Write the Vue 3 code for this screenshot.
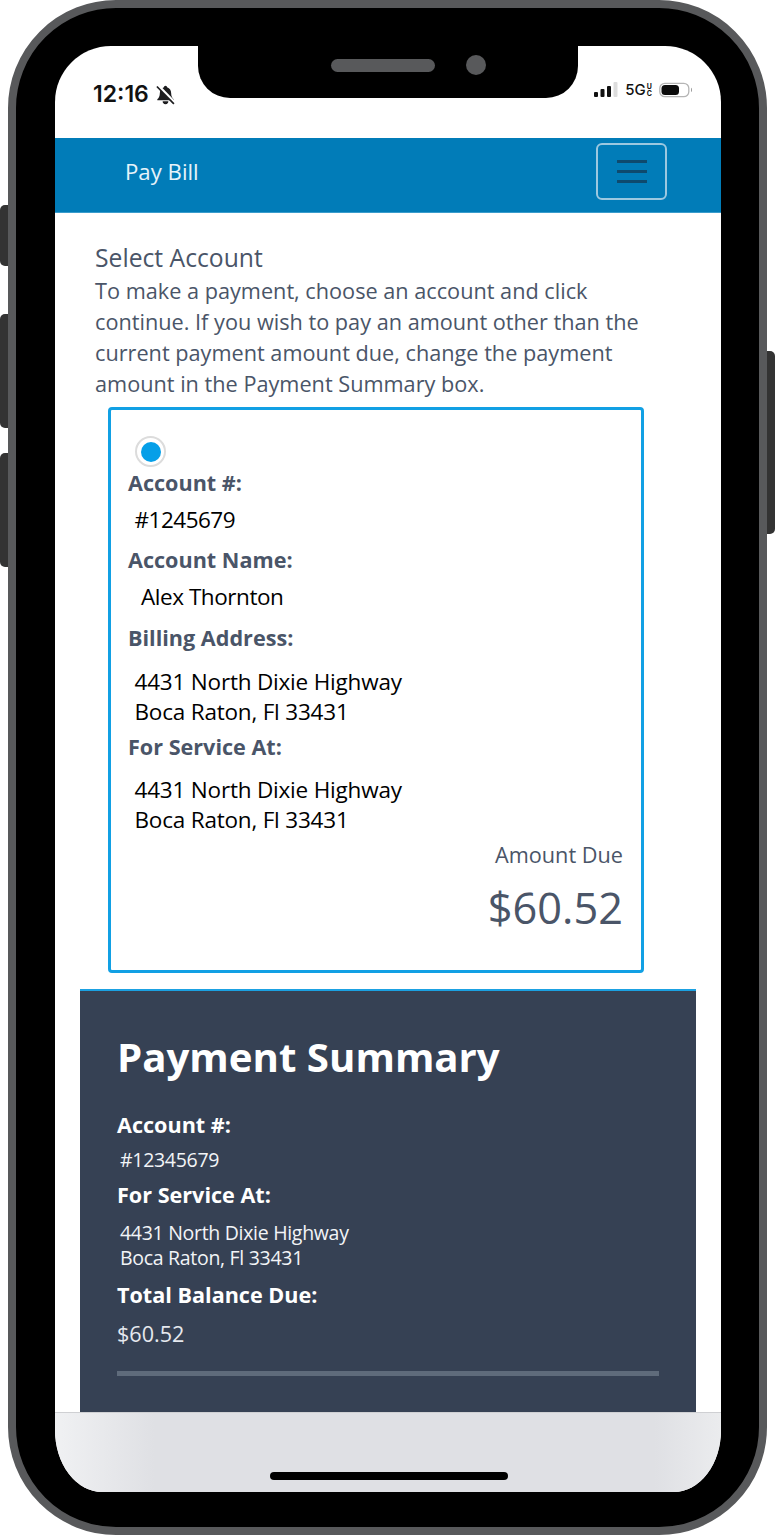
<script setup>
const card = [
  { label: 'Account #:', lines: ['#1245679'], cls: 'acct' },
  { label: 'Account Name:', lines: ['Alex Thornton'], cls: 'name' },
  { label: 'Billing Address:', lines: ['4431 North Dixie Highway', 'Boca Raton, Fl 33431'], cls: 'billing' },
  { label: 'For Service At:', lines: ['4431 North Dixie Highway', 'Boca Raton, Fl 33431'], cls: 'service' },
]
</script>

<template>
  <div class="stage">
    <span class="side-btn b1"></span>
    <span class="side-btn b2"></span>
    <span class="side-btn b3"></span>
    <span class="side-btn b4"></span>
    <div class="phone">
      <div class="screen">
        <div class="notch">
          <span class="speaker"></span>
          <span class="camera"></span>
        </div>
        <div class="status">
          <div class="status-left">
            <span class="time">12:16</span>
            <svg class="bell" viewBox="0 0 20 20" width="21" height="21">
              <path d="M10 1.600c-.9 0-1.500.7-1.500 1.500C5.900 3.900 4.600 6.100 4.600 8.700c0 2.800-.9 4.300-2.400 5.800v1h15.600v-1c-1.500-1.500-2.400-3-2.400-5.800 0-2.600-1.300-4.800-3.900-5.600 0-.8-.6-1.500-1.500-1.500z" fill="#1c1c1e"/>
              <path d="M7.300 16.500a2.700 2.700 0 0 0 5.400 0z" fill="#1c1c1e"/>
              <path d="M3 1.800 19 18.300" stroke="#fff" stroke-width="3"/>
              <path d="M1.800 2.400 18 19" stroke="#1c1c1e" stroke-width="1.600"/>
            </svg>
          </div>
          <div class="status-right">
            <svg viewBox="0 0 24 16" width="24" height="16">
              <rect x="0" y="10" width="4" height="5" rx="1" fill="#111"/>
              <rect x="6.500" y="7" width="4" height="8" rx="1" fill="#111"/>
              <rect x="13" y="4" width="4" height="11" rx="1" fill="#111"/>
              <rect x="19.500" y="0" width="4" height="15" rx="1" fill="#ddd"/>
            </svg>
            <span class="net">5G<span class="uc"><i>U</i><i>C</i></span></span>
            <svg viewBox="0 0 34 16" width="34" height="16">
              <rect x=".8" y="1.300" width="29" height="13.400" rx="5" fill="none" stroke="#b5b5b5" stroke-width="1.300"/>
              <rect x="2.500" y="3" width="17.500" height="10" rx="3.500" fill="#0b0b0b"/>
              <path d="M32 5.800c1.300.5 1.300 3.900 0 4.400z" fill="#999"/>
            </svg>
          </div>
        </div>

        <header class="topbar">
          <span class="topbar-title">Pay Bill</span>
          <button class="burger" type="button" aria-label="Menu">
            <span></span><span></span><span></span>
          </button>
        </header>

        <main class="content">
          <section class="intro">
            <h2>Select Account</h2>
            <p>To make a payment, choose an account and click continue. If you wish to pay an amount other than the current payment amount due, change the payment amount in the Payment Summary box.</p>
          </section>

          <section class="card">
            <span class="radio"><span></span></span>
            <div v-for="row in card" :key="row.label" class="row" :class="row.cls">
              <div class="label">{{ row.label }}</div>
              <div class="value">
                <div v-for="(l, i) in row.lines" :key="i">{{ l }}</div>
              </div>
            </div>
            <div class="due">
              <div class="due-label">Amount Due</div>
              <div class="due-value">$60.52</div>
            </div>
          </section>

          <section class="summary">
            <h1>Payment Summary</h1>
            <div class="s-label s-first">Account #:</div>
            <div class="s-value s-acct">#12345679</div>
            <div class="s-label s-svc">For Service At:</div>
            <div class="s-value s-addr">
              <div>4431 North Dixie Highway</div>
              <div>Boca Raton, Fl 33431</div>
            </div>
            <div class="s-label s-total">Total Balance Due:</div>
            <div class="s-amount">$60.52</div>
            <div class="s-rule"></div>
          </section>
        </main>

        <footer class="dock"><span class="home"></span></footer>
      </div>
    </div>
  </div>
</template>

<style scoped>
.stage {
  position: relative;
  width: 775px;
  height: 1536px;
  overflow: hidden;
  background: #fff;
  font-family: "Open Sans", "Noto Sans", sans-serif;
}
.side-btn {
  position: absolute;
  background: #333;
  width: 9px;
}
.b1 { left: 0; top: 205px; height: 61px; border-radius: 5px 0 0 5px; }
.b2 { left: 0; top: 314px; height: 114px; border-radius: 5px 0 0 5px; }
.b3 { left: 0; top: 453px; height: 114px; border-radius: 5px 0 0 5px; }
.b4 { right: 0; top: 351px; height: 183px; border-radius: 0 5px 5px 0; }
.phone {
  position: relative;
  box-sizing: border-box;
  width: 759px;
  height: 1535px;
  margin-left: 8px;
  padding: 38px 38px 35px 39px;
  border: 8px solid #58595b;
  border-radius: 108px;
  background: #000;
}
.screen {
  position: relative;
  display: flex;
  flex-direction: column;
  height: 100%;
  overflow: hidden;
  background: #fff;
  border-radius: 56px 56px 47px 47px / 56px 56px 62px 62px;
}
.notch {
  position: absolute;
  top: 0;
  left: 143px;
  width: 380px;
  height: 52px;
  background: #000;
  border-radius: 0 0 32px 32px;
}
.speaker {
  position: absolute;
  left: 133px;
  top: 13px;
  width: 104px;
  height: 13px;
  border-radius: 7px;
  background: #58595b;
}
.camera {
  position: absolute;
  left: 268px;
  top: 9px;
  width: 20px;
  height: 20px;
  border-radius: 50%;
  background: #58595b;
}
.status {
  display: flex;
  justify-content: space-between;
  align-items: center;
  height: 92px;
  flex: none;
  box-sizing: border-box;
  padding: 4px 28px 0 38px;
}
.status-left {
  display: flex;
  align-items: center;
  gap: 6px;
}
.time {
  font-family: Inter, Roboto, sans-serif;
  font-weight: 600;
  font-size: 23px;
  letter-spacing: 0;
  color: #111;
}
.status-right {
  display: flex;
  align-items: center;
  gap: 7px;
  margin-top: -9px;
}
.net {
  display: flex;
  align-items: center;
  font-family: Inter, Roboto, sans-serif;
  font-size: 15px;
  font-weight: 500;
  color: #111;
}
.uc {
  display: flex;
  flex-direction: column;
  margin-left: 1px;
  font-size: 7px;
  line-height: 7px;
  font-weight: 700;
}
.uc i { font-style: normal; }
.topbar {
  flex: none;
  display: flex;
  align-items: center;
  justify-content: space-between;
  box-sizing: border-box;
  height: 75px;
  padding: 0 54px 7px 70px;
  background: #017cb8;
  border-bottom: 1px solid #3a9ccc;
}
.topbar-title {
  color: #e6f3fa;
  font-size: 22.200px;
}
.burger {
  display: flex;
  flex-direction: column;
  align-items: center;
  justify-content: center;
  gap: 7px;
  box-sizing: border-box;
  width: 71px;
  height: 57px;
  padding: 0;
  background: transparent;
  border: 2px solid #9cc8e0;
  border-radius: 6px;
}
.burger span {
  display: block;
  width: 30px;
  height: 3px;
  background: #0e4a6e;
}
.content {
  flex: 1;
  min-height: 0;
  overflow: hidden;
  display: flex;
  flex-direction: column;
}
.intro {
  padding: 27px 50px 0 40px;
  color: #4a5568;
}
.intro h2 {
  margin: 0;
  font-size: 24.700px;
  line-height: 35px;
  font-weight: 400;
}
.intro p {
  margin: 0;
  font-size: 21.700px;
  line-height: 31px;
}
.card {
  box-sizing: border-box;
  display: flex;
  flex-direction: column;
  align-items: flex-start;
  width: 536px;
  height: 566px;
  margin: 8px 0 0 53px;
  padding: 26px 18px 0 17px;
  border: 3px solid #11a0e4;
  border-radius: 4px;
}
.radio {
  flex: none;
  box-sizing: border-box;
  display: flex;
  align-items: center;
  justify-content: center;
  width: 31px;
  height: 31px;
  margin-left: 7px;
  border: 2px solid #dcdcdc;
  border-radius: 50%;
}
.radio span {
  width: 20px;
  height: 20px;
  border-radius: 50%;
  background: #059fe8;
}
.row { width: 100%; }
.label {
  color: #4a5568;
  font-size: 21.600px;
  font-weight: 700;
  line-height: 30px;
}
.value {
  color: #000;
  font-family: "Open Sans", sans-serif;
  font-size: 22.500px;
  letter-spacing: -0.2px;
  line-height: 29.500px;
  padding-left: 6.500px;
}
.acct { margin-top: 1px; }
.acct .value { padding-top: 7px; letter-spacing: -0.5px; }
.name { margin-top: 10px; }
.name .value { padding-top: 7px; padding-left: 13px; letter-spacing: -0.45px; }
.billing { margin-top: 12px; }
.billing .value { padding-top: 14px; }
.service { margin-top: 6px; }
.service .value { padding-top: 13px; }
.due {
  align-self: flex-end;
  margin-top: 6px;
  color: #4a5568;
  text-align: right;
}
.due-label {
  font-size: 21.700px;
  line-height: 30px;
}
.due-value {
  font-size: 43.300px;
  line-height: 56px;
  margin-top: 10px;
}
.summary {
  box-sizing: border-box;
  flex: 1;
  width: 616px;
  margin: 16px 0 0 25px;
  padding: 0 37px;
  border-top: 2px solid #1ba1e2;
  background: #364154;
  color: #fff;
}
.summary h1 {
  margin: 37px 0 0;
  font-size: 40.200px;
  line-height: 58px;
  font-weight: 700;
}
.s-label {
  font-size: 21.600px;
  font-weight: 700;
  line-height: 30px;
}
.s-first { margin-top: 24px; }
.s-value {
  padding-left: 3px;
  font-size: 19.500px;
  letter-spacing: -0.3px;
  line-height: 25px;
  color: #f2f4f7;
}
.s-acct { margin-top: 7px; }
.s-svc { margin-top: 8px; }
.s-addr { margin-top: 10px; }
.s-total { margin-top: 10px; }
.s-amount {
  margin-top: 9px;
  font-size: 21.600px;
  line-height: 30px;
  color: #e5e8ee;
}
.s-rule {
  height: 5px;
  margin-top: 22px;
  background: #5f6b7b;
}
.dock {
  position: relative;
  flex: none;
  display: flex;
  align-items: flex-end;
  justify-content: center;
  box-sizing: border-box;
  height: 80px;
  padding: 0 0 12px 2px;
  background: linear-gradient(90deg, #f0f1f3 0%, #dfe0e4 15%, #dfe0e4 90%, #ebecee 100%);
  border-top: 1px solid #cfd0d3;
}
.home {
  width: 238px;
  height: 8px;
  border-radius: 4px;
  background: #000;
}
</style>
